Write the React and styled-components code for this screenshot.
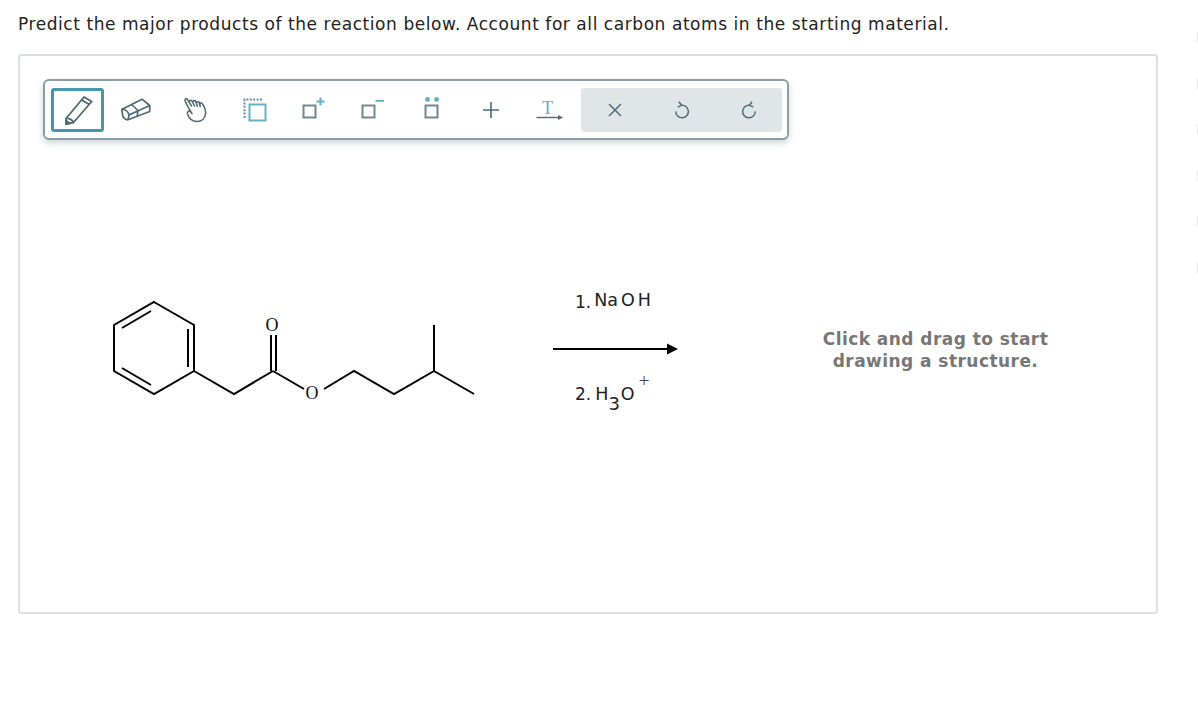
import React from 'react';
import styled, { createGlobalStyle } from 'styled-components';

const GlobalStyle = createGlobalStyle`
  html, body {
    margin: 0;
    padding: 0;
    background: #fff;
  }
  body {
    font-family: "DejaVu Sans", Verdana, sans-serif;
    color: #222;
  }
`;

const Page = styled.div`
  position: relative;
  width: 1198px;
  height: 712px;
  padding: 14px 40px 0 18px;
  box-sizing: border-box;
  overflow: hidden;
`;

const Prompt = styled.p`
  margin: 0 0 19px;
  font-size: 17px;
  line-height: 21px;
  letter-spacing: 0.56px;
  white-space: nowrap;
  color: #222;
`;

const EdgeRail = styled.div`
  position: absolute;
  right: 0;
  top: 32px;
  display: flex;
  flex-direction: column;
  gap: 35px;
`;

const EdgeTick = styled.div`
  width: 1px;
  height: 11px;
  background: #ececec;
`;

const Canvas = styled.div`
  position: relative;
  width: 1140px;
  height: 560px;
  box-sizing: border-box;
  padding: 23px 0 0 23px;
  border: 2px solid #d9dfe2;
  border-radius: 4px;
  background: #fff;
`;

const Toolbar = styled.div`
  display: flex;
  align-items: center;
  width: 746px;
  height: 61px;
  box-sizing: border-box;
  padding: 0 5px 0 6px;
  border: 2px solid #8a9ea7;
  border-radius: 6px;
  background: #fff;
  box-shadow: 0 3px 7px rgba(90, 115, 125, 0.3);
`;

const ToolGroup = styled.div`
  display: flex;
  align-items: center;
`;

const ToolButton = styled.div`
  display: flex;
  align-items: center;
  justify-content: center;
  flex: none;
  width: ${p => p.$width || 59}px;
  height: 44px;
  box-sizing: border-box;
  border-radius: 3px;
  border: ${p => (p.$active ? '3px solid #4397b1' : 'none')};
`;

const ActionGroup = styled.div`
  display: flex;
  align-items: center;
  width: 201px;
  height: 44px;
  margin-left: auto;
  border-radius: 3px;
  background: #e0e6e8;
`;

const Molecule = styled.svg`
  position: absolute;
  left: 90px;
  top: 242px;
`;

const Reaction = styled.div`
  position: absolute;
  left: 533px;
  top: 232px;
  width: 126px;
  font-size: 17px;
  color: #222;
`;

const ReagentLine = styled.div`
  display: flex;
  align-items: baseline;
  height: 24px;
  line-height: 24px;
  margin-left: 22px;
  white-space: nowrap;
`;

const StepNumber = styled.span`
  position: relative;
  top: ${p => p.$drop || 0}px;
  margin-right: ${p => p.$gap}px;
`;

const Formula = styled.span`
  margin-right: ${p => p.$gap || 0}px;
  font-size: 17.5px;
`;

const Subscript = styled.span`
  position: relative;
  top: 10px;
  margin: 0 1px 0 0;
  font-size: 18px;
`;

const Superscript = styled.span`
  position: relative;
  top: -13px;
  left: 4px;
  font-family: "Liberation Serif", serif;
  font-size: 19px;
  color: #444;
`;

const Arrow = styled.svg`
  display: block;
  margin: 31px 0 27px;
`;

const Hint = styled.div`
  position: absolute;
  left: 773px;
  top: 272px;
  width: 285px;
  text-align: center;
  font-size: 17px;
  line-height: 22px;
  letter-spacing: 0.45px;
  font-weight: 700;
  color: #777;
`;

const STROKE = '#4f6a75';
const BOX = '#6f8893';
const TEAL = '#62b1c8';

const Pencil = () => (
  <svg width="40" height="36" viewBox="0 0 40 36" fill="none" stroke={STROKE} strokeWidth="1.8" strokeLinejoin="round">
    <path d="M26 5 L33.7 9.5 L15.5 30.5 L8 32 L8 26.5 Z" />
    <path d="M23.5 8 L31.5 12.5" />
    <path d="M8 26.5 C11 26 15 28 15.5 30.5" />
    <path d="M8 32 L8 28.5 L11.6 31.4 Z" fill={STROKE} />
  </svg>
);

const Eraser = () => (
  <svg width="32" height="24" viewBox="0 0 32 24" fill="none" stroke={STROKE} strokeWidth="1.7" strokeLinejoin="round">
    <path d="M2.7 11.5 L23 1.2 L30.7 7.5 V13.5 L9 21.8 C6 21.5 4.5 20 3.8 18 Z" />
    <path d="M2.7 11.5 C6 11 9 13.5 10 17 L30.7 7.5 M10 17 L9 21.8 M12.5 6.5 L19 12.5 L18.2 17.8" />
  </svg>
);

const Hand = () => (
  <svg width="28" height="28" viewBox="0 0 28 28" fill="none" stroke={STROKE} strokeWidth="1.6" strokeLinecap="round" strokeLinejoin="round">
    <path d="M8.5 15.5 C6 11 4 7 3 4.5 C2.5 3 4.5 2 5.4 3.4 L9.5 10" />
    <path d="M7.5 5.5 C7.5 4 9.5 3.8 10 5 L12.5 10" />
    <path d="M11 5.5 C11.5 4.3 13.3 4.3 13.8 5.5 L15.3 10" />
    <path d="M14.6 6.2 C15.5 5.3 17 5.7 17.3 6.8 L18.3 10.5" />
    <path d="M17.6 7.2 C18.8 6.5 20.2 7 20.8 8.4 C23 12 24 15 23.5 18 C23 22.5 19.5 25.5 15 25.5 C10.5 25.5 7 22.5 5.5 18 C5 15.5 7 14.5 8.5 15.5 L10 17.5" />
  </svg>
);

const Selection = () => (
  <svg width="26" height="26" viewBox="0 0 26 26" fill="none">
    <path d="M2.5 21 V2.5 H20" stroke={BOX} strokeWidth="2" strokeDasharray="2 1.4" />
    <rect x="7.5" y="7.5" width="16" height="16" stroke={TEAL} strokeWidth="2" />
  </svg>
);

const AtomBox = ({ children }) => (
  <svg width="28" height="28" viewBox="0 0 28 28" fill="none">
    <rect x="3.5" y="9.5" width="12" height="12" stroke={BOX} strokeWidth="2" />
    {children}
  </svg>
);

const ChargePlus = () => (
  <AtomBox>
    <path d="M16.5 5.5 H24.5 M20.5 1.5 V9.5" stroke={TEAL} strokeWidth="2" />
  </AtomBox>
);

const ChargeMinus = () => (
  <AtomBox>
    <path d="M16.5 4.8 H25" stroke={TEAL} strokeWidth="2" />
  </AtomBox>
);

const LonePair = () => (
  <svg width="16" height="26" viewBox="0 0 16 26" fill="none">
    <circle cx="3.5" cy="2.5" r="2.4" fill={TEAL} />
    <circle cx="12.5" cy="2.5" r="2.4" fill={TEAL} />
    <rect x="1.5" y="8.5" width="12" height="12" stroke={BOX} strokeWidth="2" />
  </svg>
);

const Plus = () => (
  <svg width="18" height="18" viewBox="0 0 18 18" fill="none">
    <path d="M1 9 H17 M9 1 V17" stroke={STROKE} strokeWidth="1.6" />
  </svg>
);

const TextArrow = () => (
  <svg width="28" height="24" viewBox="0 0 28 24" fill="none">
    <text x="11.5" y="15.5" textAnchor="middle" fontFamily="Liberation Serif, serif" fontSize="18" fill={TEAL}>T</text>
    <path d="M0.5 19.5 H23" stroke={STROKE} strokeWidth="1.4" />
    <path d="M22 17 L27 19.5 L22 22 Z" fill={STROKE} />
  </svg>
);

const Close = () => (
  <svg width="14" height="14" viewBox="0 0 14 14" fill="none">
    <path d="M1 1 L13 13 M13 1 L1 13" stroke={STROKE} strokeWidth="1.5" />
  </svg>
);

const Undo = () => (
  <svg width="16" height="18" viewBox="0 0 16 18" fill="none" stroke={STROKE} strokeWidth="1.5">
    <path d="M5 0.8 L7.5 4.3 L3.8 6.2" />
    <path d="M7.5 4.3 A6.3 6.3 0 1 1 1.8 10.5" />
  </svg>
);

const Redo = () => (
  <svg width="16" height="18" viewBox="0 0 16 18" fill="none" stroke={STROKE} strokeWidth="1.5">
    <path d="M11 0.8 L8.5 4.3 L12.2 6.2" />
    <path d="M8.5 4.3 A6.3 6.3 0 1 0 14.2 10.5" />
  </svg>
);

// isopentyl phenylacetate, the viewBox is in page coordinates
const Structure = () => (
  <Molecule width="380" height="110" viewBox="110 298 380 110" fill="none" stroke="#000" strokeWidth="2">
    <path d="M154 302 L194 325 V371 L154 394 L114 371 V325 Z" />
    <path d="M151 311 L122 328 M188 329 V367 M122 368 L151 385" />
    <path d="M194 371 L234 394 L273 371" />
    <path d="M271 371 V335 M276 371 V335" />
    <path d="M273 371 L304 389" />
    <path d="M324 389 L354 371 L394 394 L434 371 V325 M434 371 L474 394" />
    <text x="272" y="331" textAnchor="middle" fontFamily="Liberation Serif, serif" fontSize="18" fill="#111" stroke="none">O</text>
    <text x="312" y="399" textAnchor="middle" fontFamily="Liberation Serif, serif" fontSize="18" fill="#111" stroke="none">O</text>
  </Molecule>
);

const App = () => (
  <>
    <GlobalStyle />
    <Page>
      <Prompt>Predict the major products of the reaction below. Account for all carbon atoms in the starting material.</Prompt>
      <Canvas>
        <Toolbar>
          <ToolGroup>
            <ToolButton $active $width={53}><Pencil /></ToolButton>
            <ToolButton $width={62}><Eraser /></ToolButton>
            <ToolButton><Hand /></ToolButton>
            <ToolButton><Selection /></ToolButton>
            <ToolButton><ChargePlus /></ToolButton>
            <ToolButton><ChargeMinus /></ToolButton>
            <ToolButton><LonePair /></ToolButton>
            <ToolButton><Plus /></ToolButton>
            <ToolButton><TextArrow /></ToolButton>
          </ToolGroup>
          <ActionGroup>
            <ToolButton $width={67}><Close /></ToolButton>
            <ToolButton $width={67}><Undo /></ToolButton>
            <ToolButton $width={67}><Redo /></ToolButton>
          </ActionGroup>
        </Toolbar>
        <Structure />
        <Reaction>
          <ReagentLine>
            <StepNumber $gap={3} $drop={2}>1.</StepNumber>
            <Formula $gap={3}>Na</Formula>
            <Formula $gap={3}>O</Formula>
            <Formula>H</Formula>
          </ReagentLine>
          <Arrow width="126" height="12" viewBox="0 0 126 12">
            <path d="M0 6 H116" stroke="#000" strokeWidth="2" />
            <path d="M114 0.5 L125 6 L114 11.5 Z" fill="#000" />
          </Arrow>
          <ReagentLine>
            <StepNumber $gap={4}>2.</StepNumber>
            <Formula>H</Formula>
            <Subscript>3</Subscript>
            <Formula>O</Formula>
            <Superscript>+</Superscript>
          </ReagentLine>
        </Reaction>
        <Hint>Click and drag to start<br />drawing a structure.</Hint>
      </Canvas>
      <EdgeRail>
        {[0, 1, 2, 3, 4, 5].map(i => <EdgeTick key={i} />)}
      </EdgeRail>
    </Page>
  </>
);

export default App;
